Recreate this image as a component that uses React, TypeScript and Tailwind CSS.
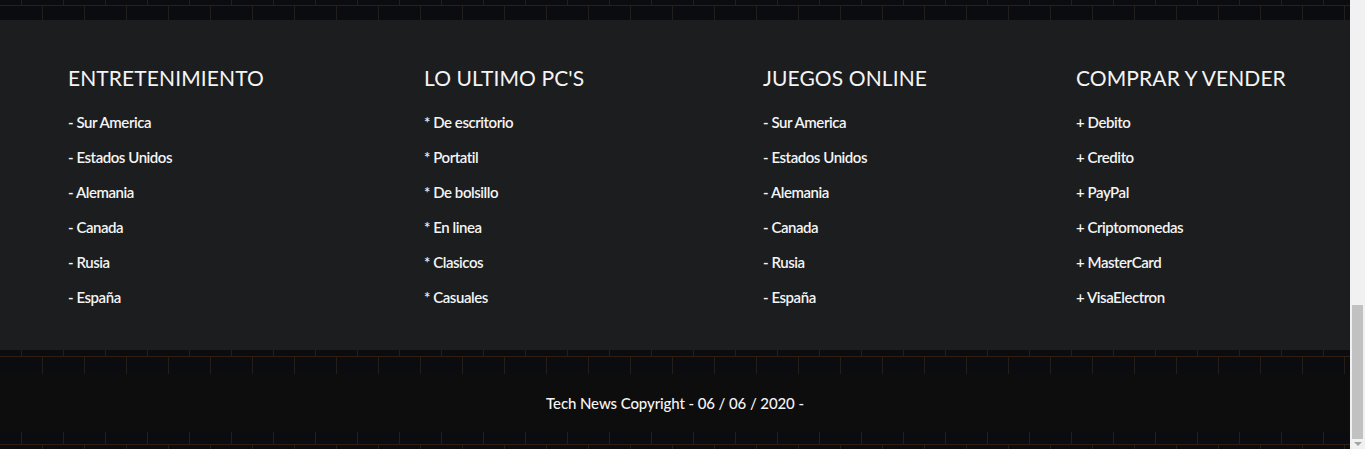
import React from 'react';

const columns = [
  {
    title: 'ENTRETENIMIENTO',
    items: ['- Sur America', '- Estados Unidos', '- Alemania', '- Canada', '- Rusia', '- España'],
  },
  {
    title: "LO ULTIMO PC'S",
    items: ['* De escritorio', '* Portatil', '* De bolsillo', '* En linea', '* Clasicos', '* Casuales'],
  },
  {
    title: 'JUEGOS ONLINE',
    items: ['- Sur America', '- Estados Unidos', '- Alemania', '- Canada', '- Rusia', '- España'],
  },
  {
    title: 'COMPRAR Y VENDER',
    items: ['+ Debito', '+ Credito', '+ PayPal', '+ Criptomonedas', '+ MasterCard', '+ VisaElectron'],
  },
];

// brick wall strip: one mortar line, bricks above offset by half a brick
function Bricks({ height, line }: { height: number; line: number }) {
  const xs = Array.from({ length: 34 }, (_, i) => i * 42);
  return (
    <svg width="1350" height={height} className="block" aria-hidden>
      <rect width="1350" height={height} fill="#0b0c0f" />
      {xs.map((x) => (
        <line key={'a' + x} x1={x + 21.5} x2={x + 21.5} y1={0} y2={line} stroke="#221f1e" strokeWidth="1" />
      ))}
      {xs.map((x) => (
        <line key={'b' + x} x1={x + 42.5} x2={x + 42.5} y1={line} y2={height} stroke="#241e1b" strokeWidth="1" />
      ))}
      <line x1="0" x2="1350" y1={line + 0.5} y2={line + 0.5} stroke="#321d0f" strokeWidth="1" />
    </svg>
  );
}

export default function App() {
  return (
    <div className="flex h-[449px] w-[1365px] overflow-hidden bg-[#0e0d0e] font-['Lato',sans-serif] text-[#f4f4f4]">
      <div className="flex w-[1350px] flex-col">
        <Bricks height={20} line={5} />

        {/* ── Footer columns ── */}
        <div className="grid h-[330px] grid-cols-[356px_339px_313px_1fr] bg-[#1b1d1f] pl-[68px] pt-[45px]">
          {columns.map((col) => (
            <div key={col.title}>
              <h3 className="text-[21px] leading-[26px] tracking-[0.1px]">{col.title}</h3>
              <ul className="mt-[22px] flex flex-col gap-[17px]">
                {col.items.map((it) => (
                  <li key={it} className="text-[15px] font-semibold leading-[18px] tracking-[-0.45px]">{it}</li>
                ))}
              </ul>
            </div>
          ))}
        </div>

        <Bricks height={24} line={6} />
        <div className="flex h-[58px] items-center justify-center bg-[#0e0d0e] text-[15px] font-medium tracking-[-0.1px]">
          Tech News Copyright - 06 / 06 / 2020 -
        </div>
        <Bricks height={17} line={12} />
      </div>

      {/* ── Scrollbar ── */}
      <div className="flex w-[15px] flex-col bg-[#f1f1f1]">
        <div className="h-[305px]" />
        <div className="mx-[2px] flex-1 bg-[#c1c1c1]" />
        <div className="flex h-[10px] items-center justify-center">
          <div className="h-0 w-0 border-x-[4px] border-t-[4px] border-x-transparent border-t-[#a3a3a3]" />
        </div>
      </div>
    </div>
  );
}
